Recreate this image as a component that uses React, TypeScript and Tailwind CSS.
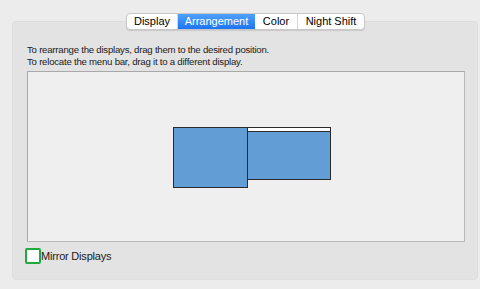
import React from "react";

export default function App() {
  const font = { fontFamily: '"Helvetica Neue", "Liberation Sans", Arial, sans-serif' };
  return (
    <div className="w-[480px] h-[289px] bg-[#ececec] relative overflow-hidden" style={font}>
      <div className="absolute left-[12px] top-[21px] w-[466px] h-[259px] rounded-[4px] bg-[#e3e3e3] border border-[#dedede]" />
      <div className="relative flex flex-col">
        <div className="flex justify-start pl-[126px] pt-[13px]">
          <div className="flex h-[17px] rounded-[4px] border border-[#c8c8c8] bg-white shadow-[0_1px_1px_rgba(0,0,0,0.12)] overflow-hidden text-[11px] leading-[15px] text-black">
            <div className="w-[51px] flex items-center justify-center border-r border-[#d6d6d6]">Display</div>
            <div className="w-[77px] flex items-center justify-center bg-gradient-to-b from-[#4fa0fb] to-[#1c74f2] text-white">Arrangement</div>
            <div className="w-[43px] flex items-center justify-center border-r border-[#d6d6d6]">Color</div>
            <div className="w-[66px] flex items-center justify-center">Night Shift</div>
          </div>
        </div>
        <div className="pl-[27px] pt-[14px] text-[9.6px] leading-[11.5px] tracking-[-0.22px] text-[#1a1a1a]">
          <div>To rearrange the displays, drag them to the desired position.</div>
          <div>To relocate the menu bar, drag it to a different display.</div>
        </div>
        <div className="ml-[27px] mt-[4px] w-[438px] h-[171px] bg-[#efefef] border border-[#a9a9a9] border-b-[#b8b8b8] border-r-[#b8b8b8] relative">
          <div className="absolute left-[145px] top-[55px] w-[75px] h-[61px] bg-[#639dd6] border border-[#2b2b2b]" />
          <div className="absolute left-[219px] top-[55px] w-[84px] h-[53px] border border-[#2b2b2b] flex flex-col">
            <div className="h-[4px] bg-white border-b border-[#2b2b2b]" />
            <div className="flex-1 bg-[#639dd6]" />
          </div>
        </div>
        <div className="flex items-center pl-[25px] pt-[6px]">
          <div className="w-[16px] h-[16px] border-2 border-[#1faa3c] rounded-[2px] bg-white" />
          <span className="text-[11px] text-[#1a1a1a] leading-[14px] tracking-[-0.2px]">Mirror Displays</span>
        </div>
      </div>
    </div>
  );
}
